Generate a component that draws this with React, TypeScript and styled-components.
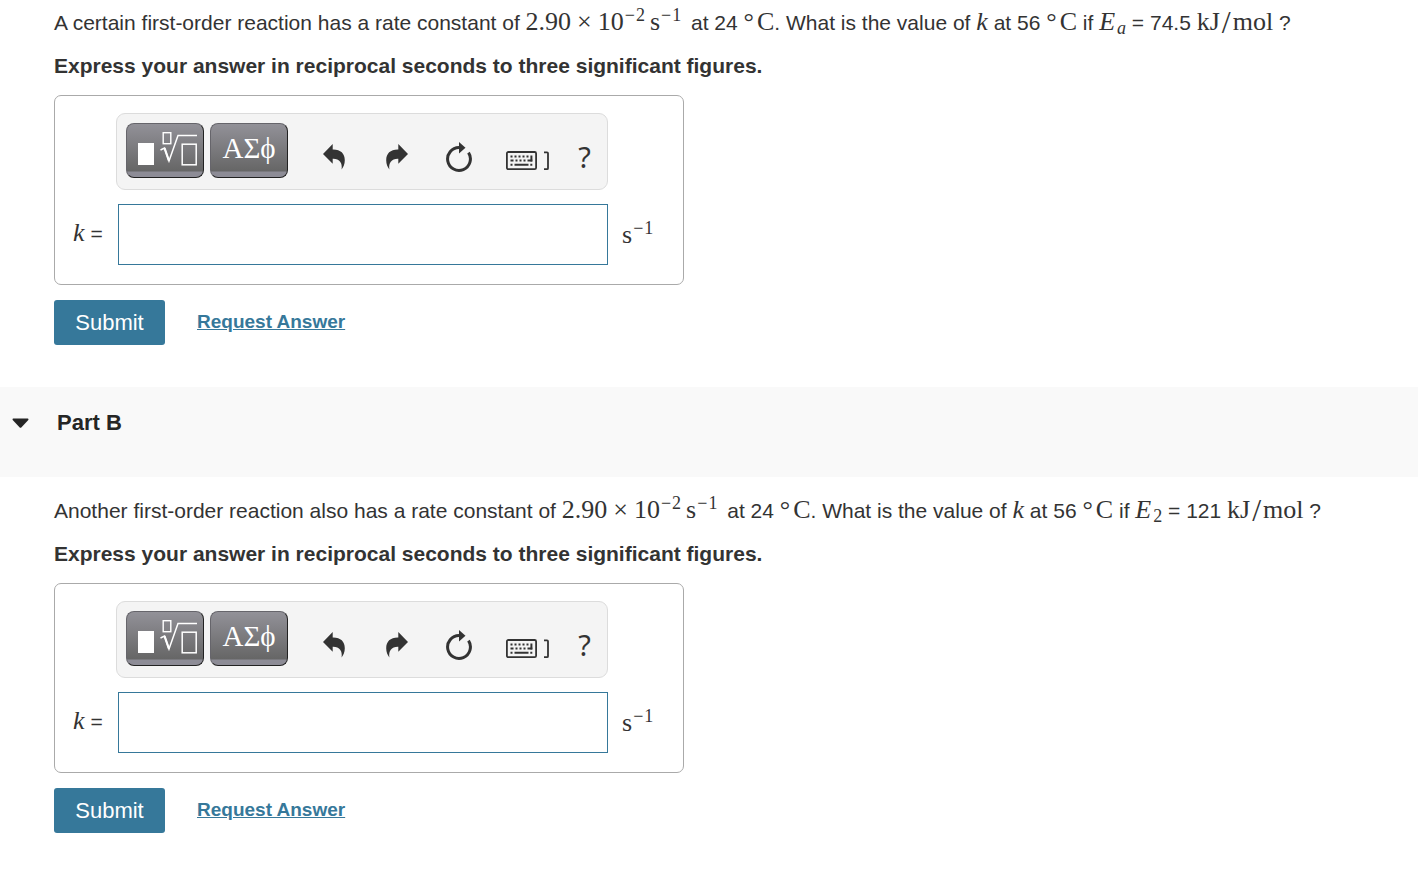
import React from "react";
import styled, { createGlobalStyle } from "styled-components";

const GlobalStyle = createGlobalStyle`
  *, *::before, *::after { box-sizing: border-box; }
  body {
    margin: 0;
    background: #fff;
    color: #333;
    font-family: "Liberation Sans", Arial, sans-serif;
    font-size: 21px;
  }
`;

const Section = styled.section`
  padding: 0 54px 42px;
`;

const Question = styled.p`
  margin: 0;
  padding-top: 1px;
  line-height: 44px;
`;

const Instruction = styled.p`
  margin: 0;
  padding-bottom: 8px;
  line-height: 42px;
  font-weight: bold;
`;

const MathText = styled.span<{ $before?: number; $after?: number }>`
  margin-left: ${(p) => p.$before ?? 0}px;
  margin-right: ${(p) => p.$after ?? 0}px;
  font-family: "Liberation Serif", "Times New Roman", serif;
  font-size: 26px;
  line-height: 1;
`;

const Variable = styled(MathText)`
  font-style: italic;
`;

const Sign = styled.span`
  margin: 0 1px;
`;

const Slash = styled.span`
  margin: 0 2px;
  font-size: 32px;
  line-height: 0;
  vertical-align: -3px;
`;

const Sup = styled.sup`
  font-size: 18px;
  line-height: 0;
  vertical-align: 9px;
`;

const Sub = styled.sub<{ $italic?: boolean }>`
  font-size: 18px;
  font-style: ${(p) => (p.$italic ? "italic" : "normal")};
  line-height: 0;
  vertical-align: -4px;
`;

const AnswerBox = styled.div`
  max-width: 630px;
  padding: 17px 29px 19px 18px;
  border: 1px solid #aaa;
  border-radius: 7px;
  display: grid;
  grid-template-columns: 45px minmax(0, 1fr) 46px;
  row-gap: 14px;
  align-items: center;
`;

const Toolbar = styled.div`
  grid-column: 2;
  margin-left: -2px;
  height: 77px;
  padding: 9px;
  display: flex;
  align-items: flex-start;
  gap: 6px;
  background: #f4f4f4;
  border: 1px solid #dcdcdc;
  border-radius: 9px;
`;

const PaletteButton = styled.button`
  width: 78px;
  height: 55px;
  padding: 0 0 5px;
  flex: none;
  display: flex;
  align-items: center;
  justify-content: center;
  color: #fff;
  font-family: "Liberation Serif", "Times New Roman", serif;
  font-size: 29px;
  line-height: 48px;
  background: linear-gradient(#929198 0, #666 47px, #8d8c96 48px, #8d8c96 100%);
  border: 1px solid #66656b;
  border-right-color: #222;
  border-bottom-color: #222;
  border-radius: 8px;
`;

const ToolButtons = styled.div`
  flex: 1;
  height: 59px;
  padding: 8px 0 0 8px;
  display: flex;
  align-items: center;
`;

const ToolButton = styled.button<{ $width: number }>`
  width: ${(p) => p.$width}px;
  height: 51px;
  padding: 0;
  flex: none;
  display: flex;
  align-items: center;
  justify-content: center;
  border: 0;
  background: none;
  color: #333;
  font-family: "Noto Sans", sans-serif;
  font-size: 29px;
  line-height: 51px;
`;

const AnswerLabel = styled.label`
  grid-column: 1;
  padding-bottom: 3px;
  white-space: nowrap;
`;

const AnswerInput = styled.input`
  width: 100%;
  height: 61px;
  padding: 0 12px;
  border: 1px solid #36789a;
  background: #fff;
  font: inherit;
  color: inherit;
`;

const Unit = styled.span`
  padding-left: 14px;
  white-space: nowrap;
`;

const Actions = styled.div`
  padding-top: 15px;
  display: flex;
  align-items: center;
  gap: 32px;
`;

const Submit = styled.button`
  width: 111px;
  height: 45px;
  padding: 0;
  border: 0;
  border-radius: 3px;
  background: #36789a;
  color: #fff;
  font-family: inherit;
  font-size: 22px;
`;

const RequestLink = styled.a`
  padding-bottom: 2px;
  color: #36789a;
  font-size: 19px;
  font-weight: bold;
  text-decoration: underline;
`;

const PartHeader = styled.header`
  height: 90px;
  margin-bottom: 11px;
  padding: 0 12px 18px;
  display: flex;
  align-items: center;
  background: #f9f9f9;
`;

const PartToggle = styled.button`
  padding: 0;
  display: flex;
  align-items: center;
  gap: 28px;
  border: 0;
  background: none;
  color: #252525;
  font: bold 22px "Liberation Sans", Arial, sans-serif;
`;

const PartTitle = styled.h2`
  margin: 0;
  font-size: 22px;
`;

const TemplateIcon = () => (
  <svg width="76" height="48" viewBox="1 1 76 48" fill="none" stroke="#fff" aria-hidden="true">
    <rect x="12" y="20" width="16" height="22" fill="#fff" stroke="none" />
    <rect x="37.2" y="9.7" width="7.6" height="11" strokeWidth="1.4" />
    <path d="M34.5 27L38.5 25L43 38L52 12.6H71" strokeWidth="1.5" />
    <path d="M38.5 25L43 38" strokeWidth="2.2" />
    <rect x="56.2" y="21.2" width="14" height="20.6" strokeWidth="1.5" />
  </svg>
);

const UndoIcon = ({ flipped = false }: { flipped?: boolean }) => (
  <svg width="22" height="26" viewBox="0 0 22 26" fill="#333" aria-hidden="true">
    <path
      transform={flipped ? "translate(22 0) scale(-1 1)" : undefined}
      d="M0 10L9.7 0V5.6C17.5 5.4 21.8 9.5 21.8 16.2C21.8 20 20.4 23 18.6 25.5C19.6 18.6 16.5 14.5 9.7 14.7V19.8Z"
    />
  </svg>
);

const ResetIcon = () => (
  <svg width="26" height="30" viewBox="0 0 26 30" aria-hidden="true">
    <path d="M13 5.6A11.4 11.4 0 1 0 22.5 10.7" fill="none" stroke="#333" strokeWidth="3" />
    <path d="M13 0L19.5 5.7L13 11.5Z" fill="#333" />
  </svg>
);

const KeyboardIcon = () => (
  <svg width="45" height="28" viewBox="0 -8 45 28" fill="none" stroke="#333" aria-hidden="true">
    <rect x="0.9" y="1" width="29.2" height="17.2" rx="1.5" strokeWidth="1.8" />
    <g strokeWidth="2">
      <path d="M4.5 5.5H24" strokeDasharray="2 2" />
      <path d="M4.5 9.5H7.500M9.500 9.500H11.500M13.500 9.500H15.500M17.500 9.500H19.500M21.500 9.500H26.300" />
      <path d="M25.4 4.5V10.5" />
      <path d="M4.5 13.7H6.5M8.5 13.7H22.5M24.3 13.7H26.3" />
    </g>
    <path d="M38 1.3H41Q42 1.3 42 2.3V17.2Q42 18.2 41 18.2H38" strokeWidth="1.8" />
  </svg>
);

const Caret = () => (
  <svg width="17" height="11" viewBox="0 0 17 11" fill="#252525" aria-hidden="true">
    <path d="M1.2 0.5H15.8Q17 0.8 16.3 1.9L9.3 9.4Q8.5 10.1 7.7 9.4L0.7 1.9Q0 0.8 1.2 0.5Z" />
  </svg>
);

const Exponent = ({ value }: { value: number }) => (
  <Sup><Sign>−</Sign>{value}</Sup>
);

const RateConstant = () => (
  <>
    <MathText>2.90</MathText>
    <MathText $before={6} $after={6}>×</MathText>
    <MathText $after={5}>10<Exponent value={2} /></MathText>
    <MathText $after={4}>s<Exponent value={1} /></MathText>
  </>
);

const Celsius = () => (
  <>
    <MathText $after={3}>°</MathText><MathText>C</MathText>
  </>
);

interface ProblemProps {
  id: string;
  subject: string;
  subscript: React.ReactNode;
  energy: string;
}

const Problem = ({ id, subject, subscript, energy }: ProblemProps) => (
  <Section>
    <Question>
      {subject} a rate constant of <RateConstant /> at 24 <Celsius />. What is the value of{" "}
      <Variable>k</Variable> at 56 <Celsius /> if <Variable $after={2}>E</Variable>
      {subscript} = {energy} <MathText>kJ<Slash>/</Slash>mol</MathText> ?
    </Question>
    <Instruction>
      Express your answer in reciprocal seconds to three significant figures.
    </Instruction>
    <AnswerBox>
      <Toolbar>
        <PaletteButton type="button" aria-label="Templates"><TemplateIcon /></PaletteButton>
        <PaletteButton type="button">ΑΣϕ</PaletteButton>
        <ToolButtons>
          <ToolButton type="button" $width={63} aria-label="Undo"><UndoIcon /></ToolButton>
          <ToolButton type="button" $width={63} aria-label="Redo"><UndoIcon flipped /></ToolButton>
          <ToolButton type="button" $width={62} aria-label="Reset"><ResetIcon /></ToolButton>
          <ToolButton type="button" $width={76} aria-label="Keyboard shortcuts"><KeyboardIcon /></ToolButton>
          <ToolButton type="button" $width={37}>?</ToolButton>
        </ToolButtons>
      </Toolbar>
      <AnswerLabel htmlFor={id}><Variable>k</Variable> =</AnswerLabel>
      <AnswerInput id={id} type="text" />
      <Unit><MathText>s<Exponent value={1} /></MathText></Unit>
    </AnswerBox>
    <Actions>
      <Submit type="button">Submit</Submit>
      <RequestLink href="#">Request Answer</RequestLink>
    </Actions>
  </Section>
);

export default function App() {
  return (
    <>
      <GlobalStyle />
      <main>
        <Problem
          id="answer-a"
          subject="A certain first-order reaction has"
          subscript={<MathText><Sub $italic>a</Sub></MathText>}
          energy="74.5"
        />
        <PartHeader>
          <PartToggle type="button" aria-expanded="true">
            <Caret />
            <PartTitle>Part B</PartTitle>
          </PartToggle>
        </PartHeader>
        <Problem
          id="answer-b"
          subject="Another first-order reaction also has"
          subscript={<MathText><Sub>2</Sub></MathText>}
          energy="121"
        />
      </main>
    </>
  );
}
